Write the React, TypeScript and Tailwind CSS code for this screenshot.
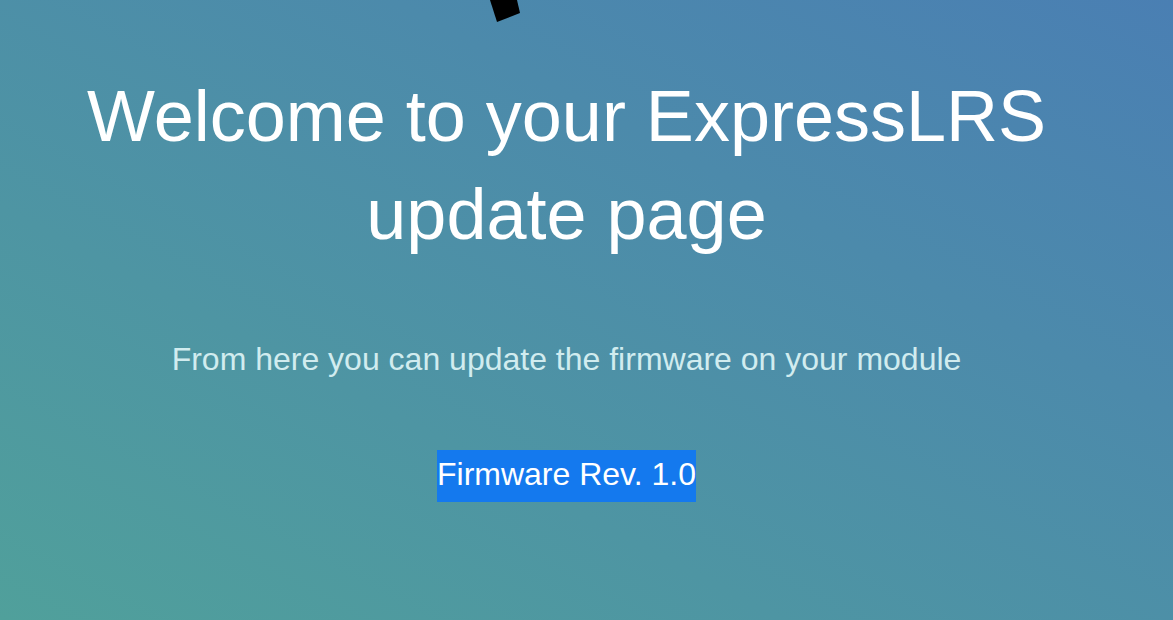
// Update page landing: centred welcome copy over a teal-to-blue gradient.

export default function App() {
  return (
    <div
      className="relative h-[620px] w-full overflow-hidden bg-[linear-gradient(to_top_right,#50a09b,#4a7fb3)] text-white"
      style={{ fontFamily: '"Liberation Sans", Arial, sans-serif' }}
    >
      {/* logo tip, mostly scrolled out of view */}
      <svg className="absolute left-0 top-0" width="600" height="30" aria-hidden="true">
        <polygon points="490,0 517,0 520,13 497,22" fill="#000" />
      </svg>

      <div className="flex w-[1133px] flex-col items-center pt-[67px] text-center">
        <h1 className="text-[72px] font-normal leading-[98px]">
          Welcome to your ExpressLRS
          <br />
          update page
        </h1>

        <p className="mt-[78px] text-[32px] leading-[37px] text-[#d1ecef]">
          From here you can update the firmware on your module
        </p>

        <div className="mt-[72px] h-[52px] bg-[#1479ee] pt-[6px] text-[32px] leading-[37px] text-white">
          Firmware Rev. 1.0
        </div>
      </div>
    </div>
  );
}
